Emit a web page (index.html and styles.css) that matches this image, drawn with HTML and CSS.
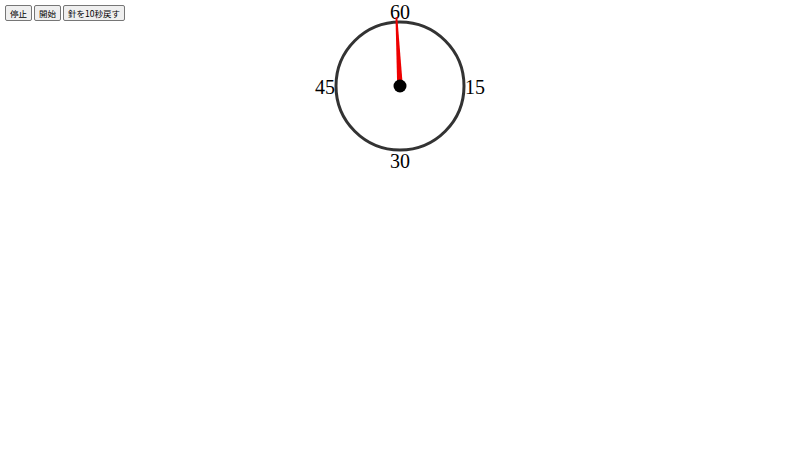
FILE: index.html
```html
<!doctype html>
<html>
  <head>
    <meta charset="utf-8">
    <title>時計</title>
    <link rel="stylesheet" href="styles.css">
  </head>
  <body>
    <div id="wrapper">
      <div id="controls">
        <button class="ctrl">停止</button>
        <button class="ctrl">開始</button>
        <button class="ctrl">針を10秒戻す</button>
      </div>
      <div id="clock-container">
        <svg id="clock" width="200" height="180" viewBox="0 0 200 180">
          <circle class="face" cx="100" cy="86" r="64" />
          <text class="label" x="100" y="19" text-anchor="middle">60</text>
          <text class="label" x="165" y="94" text-anchor="start">15</text>
          <text class="label" x="100" y="168" text-anchor="middle">30</text>
          <text class="label" x="35" y="94" text-anchor="end">45</text>
          <g transform="rotate(-3 100 86)">
            <polygon class="hand" points="97.2,86 102.8,86 100.9,17 99.1,17" />
          </g>
          <circle class="pin" cx="100" cy="86" r="6.5" />
        </svg>
      </div>
      <div></div>
    </div>
  </body>
</html>
```

FILE: styles.css
```css
body {
  margin: 0;
  font-family: "Liberation Serif", serif;
}

#wrapper {
  display: grid;
  grid-template-columns: 1fr auto 1fr;
}

#controls {
  display: flex;
  align-items: flex-start;
  gap: 2px;
  padding: 5px 0 0 5px;
}

.ctrl {
  font-family: "Noto Sans CJK JP", "Noto Sans", sans-serif;
  font-size: 8.5px;
  line-height: 12px;
  padding: 1px 4px;
  color: #000;
  background: #efefef;
  border: 1px solid #767676;
  border-radius: 2px;
}

#clock {
  display: block;
}

#clock .face {
  fill: #fff;
  stroke: #333;
  stroke-width: 3;
}

#clock .label {
  font-family: "Liberation Serif", serif;
  font-size: 20px;
  fill: #000;
}

#clock .hand {
  fill: #e00;
}

#clock .pin {
  fill: #000;
}
```
